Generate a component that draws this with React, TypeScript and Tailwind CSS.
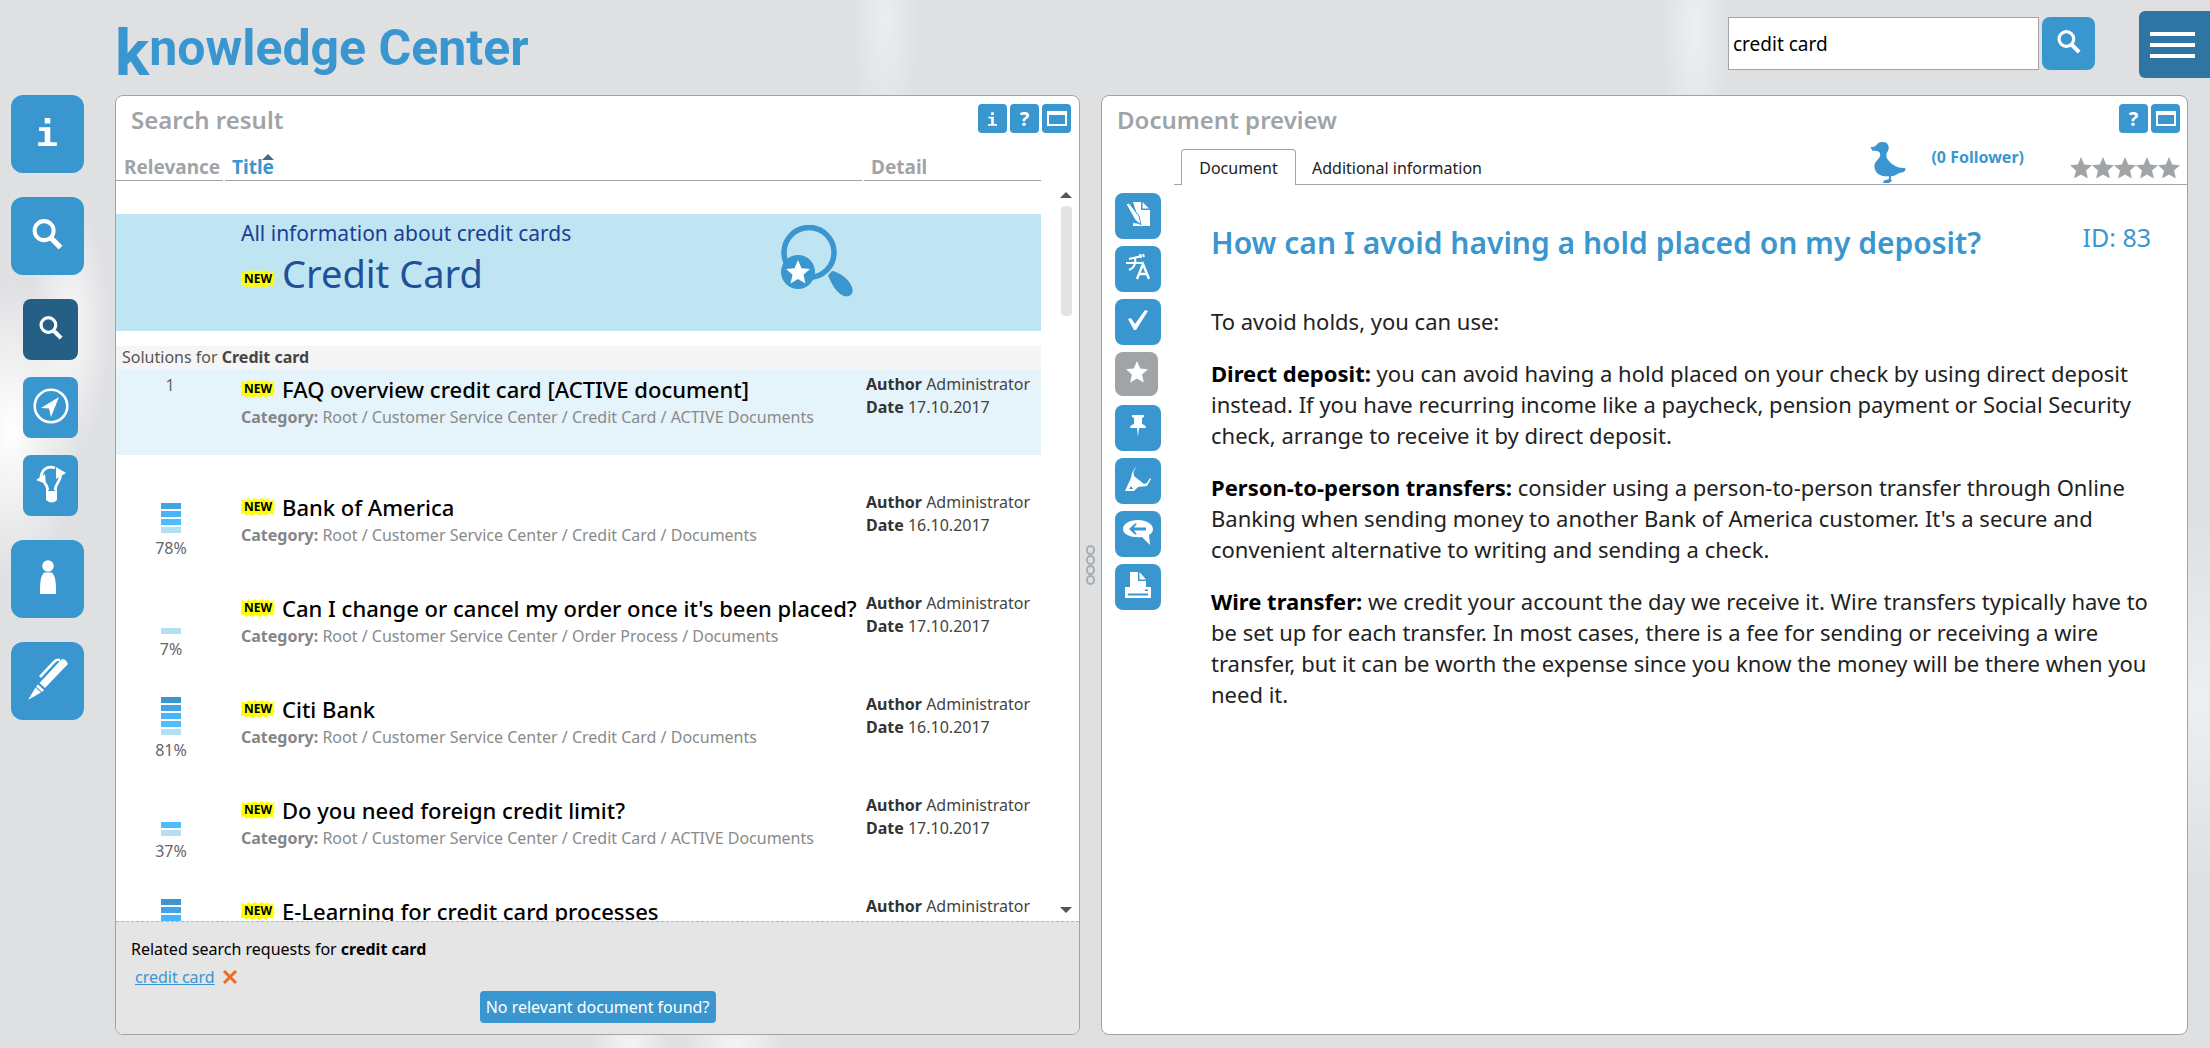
import type { ReactNode } from "react";

interface Result {
  title: string;
  path: string;
  date: string;
  relevance: number;
  bars: number;
}

const results: Result[] = [
  { title: "Bank of America", path: "Root / Customer Service Center / Credit Card / Documents", date: "16.10.2017", relevance: 78, bars: 4 },
  { title: "Can I change or cancel my order once it's been placed?", path: "Root / Customer Service Center / Order Process / Documents", date: "17.10.2017", relevance: 7, bars: 1 },
  { title: "Citi Bank", path: "Root / Customer Service Center / Credit Card / Documents", date: "16.10.2017", relevance: 81, bars: 5 },
  { title: "Do you need foreign credit limit?", path: "Root / Customer Service Center / Credit Card / ACTIVE Documents", date: "17.10.2017", relevance: 37, bars: 2 },
  { title: "E-Learning for credit card processes", path: "Root / Customer Service Center / Credit Card / Documents", date: "17.10.2017", relevance: 85, bars: 5 },
];

// top to bottom
const barColors = ["bg-[#3a96cf]", "bg-[#41a4e6]", "bg-[#47b5fb]", "bg-[#4dbdff]", "bg-[#b5dff0]"];

const starPath = "M12 0l3.500 8.200 8.500.8-6.500 5.700 2 8.800L12 19l-7.500 4.500 2-8.800L0 9l8.500-.8z";

function SearchIcon({ className }: { className: string }) {
  return (
    <svg viewBox="0 0 32 32" className={className} fill="none" stroke="white">
      <circle cx="12.5" cy="12" r="9.8" strokeWidth="4.2" />
      <path d="M19 19l10.500 10.500" strokeWidth="5.5" />
    </svg>
  );
}

function InfoIcon({ className }: { className: string }) {
  return (
    <svg viewBox="0 0 20 30" className={className} fill="white">
      <path d="M7 0h6v6H7zM1 10h12v16h7v4H0v-4h7V14H1z" />
    </svg>
  );
}

function NewBadge({ className = "" }: { className?: string }) {
  return (
    <span className={`relative inline-flex h-[18px] w-[34px] shrink-0 items-center justify-center ${className}`}>
      <svg viewBox="0 0 34 18" className="absolute inset-0 h-full w-full" fill="#ffff00">
        <path d="M0 1l5 2 2-3 3 2 4-2 3 2 4-2 3 2 3-2 2 3 5-2-2 4 2 2-2 2 2 2-2 2 1 4-5-2-3 3-3-2-4 2-3-2-4 2-3-2-3 2-2-3-4 2 1-4-1-2 2-2-2-2 2-2z" />
      </svg>
      <span className="relative text-[12px] leading-none font-bold text-black">NEW</span>
    </span>
  );
}

function PanelButton({ label, children }: { label: string; children: ReactNode }) {
  return (
    <button aria-label={label} className="flex h-[29px] w-[29px] items-center justify-center rounded bg-[#3a96cf] text-white">
      {children}
    </button>
  );
}

function WindowIcon() {
  return (
    <svg viewBox="0 0 20 15" className="h-[15px] w-5" fill="white">
      <path fillRule="evenodd" d="M0 0h20v15H0zM2 4v9h16V4z" />
    </svg>
  );
}

function NavButton({ label, size = "large", children }: { label: string; size?: "large" | "small" | "active"; children: ReactNode }) {
  const look = {
    large: "h-[78px] w-[73px] rounded-xl bg-[#3a96cf]",
    small: "ml-3 h-[61px] w-[55px] rounded-lg bg-[#3a96cf]",
    active: "ml-3 h-[61px] w-[55px] rounded-lg bg-[#265f86]",
  }[size];
  return (
    <button aria-label={label} className={`flex items-center justify-center ${look}`}>
      {children}
    </button>
  );
}

function SideNav() {
  return (
    <nav className="flex w-[115px] shrink-0 flex-col gap-6 pl-[11px]">
      <NavButton label="Information">
        <InfoIcon className="mb-1 h-7 w-[19px]" />
      </NavButton>
      <NavButton label="Search">
        <SearchIcon className="mb-1 h-[31px] w-[31px]" />
      </NavButton>
      <div className="flex flex-col gap-[17px]">
        <NavButton label="Result search" size="active">
          <SearchIcon className="mb-1 h-6 w-6" />
        </NavButton>
        <NavButton label="Navigator" size="small">
          <svg viewBox="0 0 36 36" className="mb-1 h-9 w-9" fill="white">
            <circle cx="18" cy="18" r="16.3" fill="none" stroke="white" strokeWidth="2.6" />
            <path d="M26 9L8 20l8 .5L18 29z" />
          </svg>
        </NavButton>
        <NavButton label="Ideas" size="small">
          <svg viewBox="0 0 30 38" className="mb-1 h-[38px] w-[30px]" fill="none" stroke="white" strokeWidth="2.800">
            <path d="M5 14C5 5 11 0 19 3" />
            <path d="M24 9c2 6-4 8-5 16M8 17c2 2 3 4 4 8" />
            <path d="M20 2l10 6-10 6zM0 15l9-6 1 10z" fill="white" stroke="none" />
            <path d="M10 24h2v2h7v-2h2v11q-5 5-11 0z" fill="white" stroke="none" />
          </svg>
        </NavButton>
      </div>
      <NavButton label="Profile">
        <svg viewBox="0 0 18 34" className="mb-1 h-[34px] w-[18px]" fill="white">
          <circle cx="9" cy="6" r="5.800" />
          <path d="M5 12.500h8c4 4 4 12 4 21.500H1C1 24.500 1 16.500 5 12.500z" />
        </svg>
      </NavButton>
      <NavButton label="Edit">
        <svg viewBox="0 0 40 42" className="mb-1 h-[42px] w-10" fill="white">
          <path d="M11.500 25L31 4l3-3q4 0 6 5l-3 3-20 21zM10 26.500l6 5.500-2 2-6-5.500zM7.500 29.500l5.500 5L0 42z" />
          <path d="M12 19L26 4q2-3 6-2" fill="none" stroke="white" strokeWidth="2.600" />
        </svg>
      </NavButton>
    </nav>
  );
}

function Detail({ date }: { date: string }) {
  return (
    <div className="w-[175px] shrink-0 pt-1 text-[16px] leading-[23px] whitespace-nowrap text-[#444]">
      <div><b className="text-[#333]">Author</b> Administrator</div>
      <div><b className="text-[#333]">Date</b> {date}</div>
    </div>
  );
}

function Entry({ title, path }: { title: string; path: string }) {
  return (
    <div className="min-w-0 flex-1 pt-[5px] whitespace-nowrap">
      <a href="#" className="flex items-center gap-[7px] text-[22px] leading-[30px] font-medium text-black">
        <NewBadge />
        {title}
      </a>
      <div className="text-[16px] leading-[26px] text-[#8a8a8a]">
        <b className="text-[#858585]">Category:</b> {path}
      </div>
    </div>
  );
}

function SearchResults() {
  return (
    <section className="flex w-[965px] shrink-0 flex-col overflow-hidden rounded-lg border border-[#a0a4a7] bg-white">
      <div className="flex justify-between pt-2 pr-2 pl-[15px]">
        <h2 className="text-[24px] leading-8 font-semibold text-[#a0a4a7]">Search result</h2>
        <div className="flex gap-[3px]">
          <PanelButton label="Information"><InfoIcon className="h-[14px] w-[9px]" /></PanelButton>
          <PanelButton label="Help"><span className="text-[20px] leading-none font-bold">?</span></PanelButton>
          <PanelButton label="Maximize"><WindowIcon /></PanelButton>
        </div>
      </div>
      <div className="mt-[18px] mr-[38px] flex gap-[2px] text-[19px] leading-[26px] font-bold text-[#a0a4a7]">
        <div className="w-[107px] border-b border-[#a0a4a7] pl-2">Relevance</div>
        <div className="flex-1 border-b border-[#a0a4a7] pl-[7px] text-[#3a96cf]">
          <span className="relative">
            Title
            <svg viewBox="0 0 12 6" className="absolute top-0 right-0 h-[6px] w-3" fill="#456b80"><path d="M6 0l6 6H0z" /></svg>
          </span>
        </div>
        <div className="w-[177px] border-b border-[#a0a4a7] pl-[7px]">Detail</div>
      </div>

      <div className="flex h-0 grow overflow-hidden">
        <div className="min-w-0 flex-1 pt-[33px]">
          <div className="flex h-[117px] justify-between bg-[#bfe4f2] pr-[188px] pl-[125px]">
            <div>
              <div className="pt-[5px] text-[21px] leading-7 text-[#1a3e94]">All information about credit cards</div>
              <div className="flex items-center gap-[7px] text-[38px] leading-[52px] text-[#1f5099]">
                <NewBadge className="mt-3" />
                Credit Card
              </div>
            </div>
            <svg viewBox="0 0 72 72" className="mt-[11px] h-[72px] w-[72px]" fill="#3a96cf">
              <ellipse cx="28" cy="27.500" rx="25" ry="25" fill="none" stroke="#3a96cf" strokeWidth="5.5" />
              <path d="M51 46c7 1 16 7 20 16 2 6-1 9-6 9.500-7-1-13-9-18-21z" />
              <circle cx="17" cy="47" r="17" />
              <path d={starPath} fill="white" transform="translate(5 35)" />
            </svg>
          </div>
          <div className="mt-[15px] bg-[#f5f5f5] pl-[6px] text-[16px] leading-[23px] text-[#555]">
            Solutions for <b className="text-[#444]">Credit card</b>
          </div>
          <div className="mb-8 flex h-[86px] bg-[#e5f3fa]">
            <div className="w-[125px] pt-1 pr-[17px] text-center text-[16px] leading-6 text-[#666]">1</div>
            <Entry title="FAQ overview credit card [ACTIVE document]" path="Root / Customer Service Center / Credit Card / ACTIVE Documents" />
            <Detail date="17.10.2017" />
          </div>
          {results.map((result) => (
            <div key={result.title} className="flex h-[101px]">
              <div className="flex w-[125px] flex-col items-center pt-2 pr-[15px]">
                <div className="flex h-[38px] flex-col justify-end gap-[2px]">
                  {barColors.slice(5 - result.bars).map((color) => (
                    <div key={color} className={`h-[6px] w-5 ${color}`} />
                  ))}
                </div>
                <div className="pt-[3px] text-[16px] leading-6 text-[#666]">{result.relevance}%</div>
              </div>
              <Entry title={result.title} path={result.path} />
              <Detail date={result.date} />
            </div>
          ))}
        </div>
        <div className="flex w-[38px] flex-col items-center pt-[11px] pb-2 pl-3">
          <svg viewBox="0 0 12 6" className="h-[6px] w-3" fill="#555"><path d="M6 0l6 6H0z" /></svg>
          <div className="mt-2 h-[110px] w-[11px] rounded-sm bg-[#e3e3e3]" />
          <svg viewBox="0 0 12 6" className="mt-auto h-[6px] w-3" fill="#555"><path d="M0 0h12L6 6z" /></svg>
        </div>
      </div>

      <div className="flex h-[113px] shrink-0 flex-col border-t border-dashed border-[#b5b5b5] bg-[#e5e5e5] px-[15px] pt-[13px] text-[16px] leading-7">
        <div>Related search requests for <b>credit card</b></div>
        <div className="flex items-center gap-2 pl-1">
          <a href="#" className="text-[#3a96cf] underline">credit card</a>
          <button aria-label="Remove">
            <svg viewBox="0 0 14 14" className="h-[14px] w-[14px]" stroke="#f26b1d" strokeWidth="3"><path d="M1 1l12 12M13 1L1 13" /></svg>
          </button>
        </div>
        <button className="h-8 w-[236px] self-center rounded bg-[#3a96cf] text-white">No relevant document found?</button>
      </div>
    </section>
  );
}

function ToolButton({ label, children }: { label: string; children: ReactNode }) {
  return (
    <button aria-label={label} className="flex h-[46px] w-[46px] items-center justify-center rounded-lg bg-[#3a96cf]">
      {children}
    </button>
  );
}

function DocumentTools() {
  return (
    <div className="flex w-[60px] shrink-0 flex-col gap-[7px] pt-2">
      <ToolButton label="Edit document">
        <svg viewBox="0 0 24 24" className="mb-1 h-6 w-6" fill="white">
          <path d="M7 0h8v8h9v16H7v-3l7 1z" />
          <path d="M16.500 0v6.500H23z" />
          <path d="M0 2l3-1 10 13 2 9-6-5z" stroke="#3a96cf" />
        </svg>
      </ToolButton>
      <ToolButton label="Translate">
        <svg viewBox="0 0 24 26" className="mb-1 h-[26px] w-6" fill="none" stroke="white" strokeWidth="2">
          <path d="M3 5l13-3M0 9h16M9 4c1 6-1 10-6 12M14 0l1 4M17 0l1 3" />
          <path d="M11 25l6-15 6 15M13 20h8" strokeWidth="2.4" />
        </svg>
      </ToolButton>
      <ToolButton label="Confirm">
        <svg viewBox="0 0 20 20" className="mb-1 h-5 w-5" fill="white">
          <path d="M0 9l3-1 4 6L17 0l3 1L8 20H6z" />
        </svg>
      </ToolButton>
      <button aria-label="Favorite" className="mb-[2px] flex h-[44px] w-[43px] items-center justify-center rounded-lg bg-[#a0a4a7]">
        <svg viewBox="0 0 24 24" className="mb-1 h-[22px] w-[22px]" fill="white"><path d={starPath} /></svg>
      </button>
      <ToolButton label="Pin">
        <svg viewBox="0 0 16 22" className="mb-1 h-[22px] w-4" fill="white">
          <path d="M2 0h12v2l-2 1v6q4 1 4 4H9l-1 9-1-9H0q0-3 4-4V3L2 2z" />
        </svg>
      </ToolButton>
      <ToolButton label="Mark">
        <svg viewBox="0 0 26 24" className="mb-1 h-6 w-[26px]" fill="white">
          <path fillRule="evenodd" d="M11 0L8.500 5 9 9l10 8 3-1 3-5 1 1-4 7-9 1-4 4H0l6-13 1-5 3-5zM4 22h4l-2-3z" />
        </svg>
      </ToolButton>
      <ToolButton label="Feedback">
        <svg viewBox="0 0 30 25" className="mb-1 h-[25px] w-[30px]" fill="white">
          <path fillRule="evenodd" d="M15 0c8 0 15 4 15 9 0 3-2 5-4 6l1 10-8-8C9 18 0 15 0 9 0 4 6 0 15 0zM6 9l6 5.500h2L11 10.500h12v-3H11l3-4h-2z" />
        </svg>
      </ToolButton>
      <ToolButton label="Print">
        <svg viewBox="0 0 26 26" className="mb-1 h-[26px] w-[26px]" fill="white">
          <path d="M5 0h8v9h8v7H5zM14.500 0l6.500 7.500h-6.500z" />
          <path fillRule="evenodd" d="M0 15h26v11H0zM3 21.500v2h20v-2zM20 17.500v1.500h3v-1.500z" />
        </svg>
      </ToolButton>
    </div>
  );
}

function DocumentPreview() {
  return (
    <section className="flex min-w-0 flex-1 flex-col overflow-hidden rounded-lg border border-[#a0a4a7] bg-white">
      <div className="flex justify-between pt-2 pr-[7px] pl-[15px]">
        <h2 className="text-[24px] leading-8 font-semibold text-[#a0a4a7]">Document preview</h2>
        <div className="flex gap-[3px]">
          <PanelButton label="Help"><span className="text-[20px] leading-none font-bold">?</span></PanelButton>
          <PanelButton label="Maximize"><WindowIcon /></PanelButton>
        </div>
      </div>
      <div className="ml-[72px] flex h-[49px] items-end border-b border-[#a0a4a7] pl-[7px] text-[16px] text-[#222]">
        <button className="-mb-px h-9 w-[115px] rounded-t border border-b-0 border-[#a0a4a7] bg-white">Document</button>
        <button className="h-8 px-4">Additional information</button>
        <svg viewBox="0 0 36 42" className="mb-px ml-auto h-[41px] w-9" fill="#3a96cf">
          <path d="M0 5.500C4 5 6 4 7 2c2-2 4-2 6-2 5 0 7 5 5 9-2 3-2 5-1 8 3 4 7 8 12 9l7 1c0 5-5 4-7 5-3 2-5 3-8 3v3l1 2-3 2h-6q0-3 3-3l3-1v-3C9 36 4 31 4 24c1-5 6-7 6-11 0-4-4-4-8-4z" />
        </svg>
        <a href="#" className="mr-[46px] ml-[25px] h-10 pt-px text-[16px] font-bold text-[#3a96cf]">(0 Follower)</a>
        <div className="mr-[7px] mb-[5px] flex" aria-label="Rating">
          {[1, 2, 3, 4, 5].map((n) => (
            <svg key={n} viewBox="0 0 24 24" className="h-[22px] w-[22px]" fill="#a0a4a7"><path d={starPath} /></svg>
          ))}
        </div>
      </div>
      <div className="flex flex-1 pl-[13px]">
        <DocumentTools />
        <article className="min-w-0 flex-1 pt-[38px] pr-[36px] pl-[36px] text-[22px] leading-[31px] text-[#222]">
          <div className="mb-[43px] flex justify-between text-[#3a96cf]">
            <h1 className="text-[30px] leading-10 font-semibold">How can I avoid having a hold placed on my deposit?</h1>
            <span className="text-[25px] leading-7">ID: 83</span>
          </div>
          <div className="flex flex-col gap-[21px]">
            <p>To avoid holds, you can use:</p>
            <p><b className="text-black">Direct deposit:</b> you can avoid having a hold placed on your check by using direct deposit instead. If you have recurring income like a paycheck, pension payment or Social Security check, arrange to receive it by direct deposit.</p>
            <p><b className="text-black">Person-to-person transfers:</b> consider using a person-to-person transfer through Online Banking when sending money to another Bank of America customer. It's a secure and convenient alternative to writing and sending a check.</p>
            <p><b className="text-black">Wire transfer:</b> we credit your account the day we receive it. Wire transfers typically have to be set up for each transfer. In most cases, there is a fee for sending or receiving a wire transfer, but it can be worth the expense since you know the money will be there when you need it.</p>
          </div>
        </article>
      </div>
    </section>
  );
}

export default function App() {
  return (
    <div className="flex min-h-screen flex-col bg-[#dfe0e2] bg-[radial-gradient(ellipse_70px_150px_at_10px_430px,#ffffff,transparent),radial-gradient(ellipse_40px_130px_at_70px_330px,#f8f8f9,transparent),radial-gradient(ellipse_34px_130px_at_885px_20px,#ecedef,transparent),radial-gradient(ellipse_34px_140px_at_1695px_30px,#eeeff1,transparent),radial-gradient(ellipse_40px_60px_at_630px_1048px,#f4f5f6,transparent),radial-gradient(ellipse_50px_60px_at_735px_1048px,#f4f5f6,transparent),radial-gradient(ellipse_60px_180px_at_2200px_700px,#eeeff0,transparent)] font-['Noto_Sans',sans-serif]">
      <header className="flex h-[95px] items-start justify-between pl-[115px]">
        <div className="pt-[18px] font-['Roboto',sans-serif] text-[50px] leading-[60px] font-bold text-[#3a96cf]">
          <span className="align-[-10px] text-[64px] leading-[0px]">k</span>nowledge Center
        </div>
        <div className="flex items-start">
          <form className="flex gap-[3px] pt-[17px]" onSubmit={(e) => e.preventDefault()}>
            <input type="text" aria-label="Search text" defaultValue="credit card" className="h-[53px] w-[311px] border border-[#a0a4a7] bg-white px-1 text-[19px] text-black" />
            <button aria-label="Search" className="flex h-[53px] w-[53px] items-center justify-center rounded-lg bg-[#3a96cf]">
              <SearchIcon className="mb-1 h-6 w-6" />
            </button>
          </form>
          <button aria-label="Menu" className="mt-[11px] ml-11 flex h-[67px] w-[71px] flex-col items-start justify-center gap-[7px] rounded-l-md bg-[#2e75a3] pl-[11px]">
            <span className="h-1 w-[45px] bg-white" />
            <span className="h-1 w-[45px] bg-white" />
            <span className="h-1 w-[45px] bg-white" />
          </button>
        </div>
      </header>
      <main className="mb-[13px] flex flex-1 pr-[22px]">
        <SideNav />
        <SearchResults />
        <div className="flex w-[21px] shrink-0 flex-col items-center justify-center">
          {[1, 2, 3, 4].map((n) => (
            <span key={n} className="h-[10px] w-[9px] rounded-full border-2 border-[#a9adb0]" />
          ))}
        </div>
        <DocumentPreview />
      </main>
    </div>
  );
}
